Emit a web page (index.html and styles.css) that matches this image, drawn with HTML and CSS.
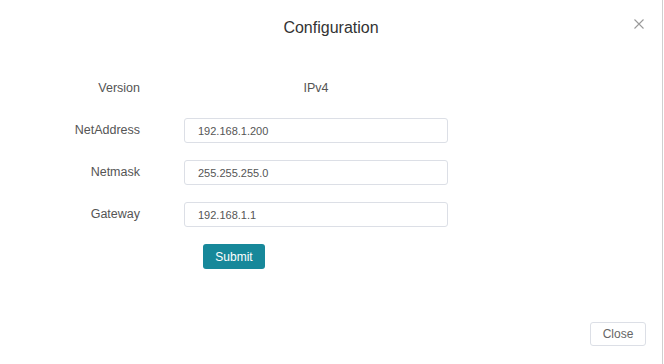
FILE: index.html
```html
<!DOCTYPE html>
<html lang="en">
<head>
    <meta charset="UTF-8">
    <meta name="viewport" content="width=device-width, initial-scale=1.0">
    <title>Configuration</title>
    <link rel="stylesheet" href="styles.css">
</head>
<body>
    <!-- Configuration dialog -->
    <div class="dialog">
        <div class="dialog-header">
            <div class="dialog-title">Configuration</div>
            <button class="dialog-close" aria-label="Close">
                <svg width="10" height="10" viewBox="0 0 10 10">
                    <path d="M0.5 0.5 L9.5 9.5 M9.5 0.5 L0.5 9.5" stroke="#9a9a9a" stroke-width="1.1" fill="none"/>
                </svg>
            </button>
        </div>

        <form class="config-form">
            <div class="form-label">Version</div>
            <div class="form-value">IPv4</div>

            <label class="form-label" for="net-address">NetAddress</label>
            <input class="form-input" type="text" id="net-address" value="192.168.1.200">

            <label class="form-label" for="netmask">Netmask</label>
            <input class="form-input" type="text" id="netmask" value="255.255.255.0">

            <label class="form-label" for="gateway">Gateway</label>
            <input class="form-input" type="text" id="gateway" value="192.168.1.1">

            <div></div>
            <div><button type="button" class="submit-button">Submit</button></div>
        </form>

        <div class="dialog-footer">
            <button class="close-button">Close</button>
        </div>
    </div>
</body>
</html>
```

FILE: styles.css
```css
body {
    margin: 0;
    padding: 0;
    font-family: "Liberation Sans", Arial, sans-serif;
    background-color: #fff;
    color: #555;
}

/* Dialog */
.dialog {
    width: 663px;
    height: 364px;
    box-sizing: border-box;
    border-right: 1px solid #cfcfcf;
    display: flex;
    flex-direction: column;
}

.dialog-header {
    position: relative;
    padding-top: 18px;
    text-align: center;
}

.dialog-title {
    font-size: 16px;
    line-height: 20px;
    color: #333;
}

.dialog-close {
    position: absolute;
    top: 19px;
    right: 18px;
    width: 10px;
    height: 10px;
    padding: 0;
    border: none;
    background: none;
    cursor: pointer;
    display: flex;
}

/* Form */
.config-form {
    display: grid;
    grid-template-columns: 80px 264px;
    column-gap: 44px;
    row-gap: 17px;
    grid-auto-rows: 25px;
    margin: 38px 0 0 60px;
}

.form-label {
    text-align: right;
    font-size: 12.5px;
    line-height: 25px;
    color: #555;
}

.form-value {
    text-align: center;
    font-size: 12.5px;
    line-height: 25px;
    color: #555;
}

.form-input {
    height: 25px;
    box-sizing: border-box;
    border: 1px solid #dcdfe6;
    border-radius: 3px;
    padding: 0 13px;
    font-family: inherit;
    font-size: 11px;
    color: #555;
    outline: none;
}

.submit-button {
    margin-left: 19px;
    width: 62px;
    height: 25px;
    border: none;
    border-radius: 3px;
    background-color: #17889a;
    color: #fff;
    font-family: inherit;
    font-size: 12px;
    cursor: pointer;
}

/* Footer */
.dialog-footer {
    margin-top: auto;
    padding: 0 16px 18px 0;
    display: flex;
    justify-content: flex-end;
}

.close-button {
    width: 56px;
    height: 24px;
    border: 1px solid #dcdfe6;
    border-radius: 3px;
    background-color: #fff;
    color: #666;
    font-family: inherit;
    font-size: 12px;
    cursor: pointer;
}
```
